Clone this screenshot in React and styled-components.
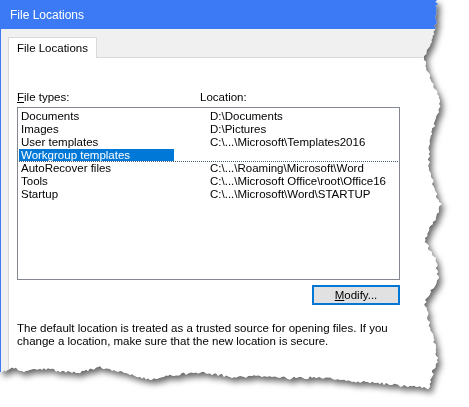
import React from "react";
import styled, { createGlobalStyle } from "styled-components";

const GlobalStyle = createGlobalStyle`
  body {
    margin: 0;
    background: #fff;
  }
`;

// torn paper edge, built from a few key points plus a small fixed jitter
const rightEdge = [
  [0, 437], [20, 436], [40, 432], [60, 424], [80, 430], [100, 441],
  [120, 436], [140, 430], [165, 429], [190, 434], [205, 441], [225, 432],
  [240, 424], [260, 436], [280, 438], [300, 425], [320, 428], [340, 434],
  [360, 437], [375, 432], [386, 430],
];
const bottomEdge = [
  [430, 388], [410, 386], [380, 383], [350, 381], [320, 377], [290, 378],
  [260, 376], [234, 377], [200, 372], [170, 375], [150, 379], [130, 374],
  [100, 367], [80, 372], [60, 371], [40, 368], [25, 372], [12, 367],
  [5, 372], [0, 371],
];

const jitter = (i) => {
  const v = Math.sin(i * 12.9898) * 43758.5453;
  return (v - Math.floor(v) - 0.5) * 3;
};

const lerp = (pts, t) => {
  for (let k = 0; k < pts.length - 1; k++) {
    const [a, av] = pts[k];
    const [b, bv] = pts[k + 1];
    const lo = Math.min(a, b);
    const hi = Math.max(a, b);
    if (t >= lo && t <= hi) {
      return av + ((bv - av) * (t - a)) / (b - a || 1);
    }
  }
  return pts[pts.length - 1][1];
};

const buildClip = () => {
  const pts = ["0px 0px"];
  let i = 0;
  for (let y = 0; y <= 386; y += 2) {
    const x = lerp(rightEdge, y) + (y === 0 ? 0 : jitter(i++));
    pts.push(`${x.toFixed(1)}px ${y}px`);
  }
  for (let x = 430; x >= 0; x -= 2) {
    const y = lerp(bottomEdge, x) + jitter(i++);
    pts.push(`${x}px ${y.toFixed(1)}px`);
  }
  pts.push("0px 371px");
  return `polygon(${pts.join(", ")})`;
};

const clip = buildClip();

const Page = styled.div`
  width: 469px;
  height: 407px;
  background: #fff;
  overflow: hidden;
`;

const Shadow = styled.div`
  width: 448px;
  height: 392px;
  filter: drop-shadow(3px 4px 3px rgba(0, 0, 0, 0.6));
`;

const Dialog = styled.div`
  width: 100%;
  height: 100%;
  box-sizing: border-box;
  display: flex;
  flex-direction: column;
  background: #f0f0f0;
  border-left: 1px solid #3b79f5;
  clip-path: ${clip};
  font-family: "Liberation Sans", Arial, sans-serif;
  font-size: 11.5px;
  color: #000;
`;

const TitleBar = styled.div`
  height: 29px;
  flex: none;
  display: flex;
  align-items: center;
  padding-left: 9px;
  background: #3b79f5;
  color: #fff;
  font-size: 12px;
`;

const Body = styled.div`
  flex: 1;
  display: flex;
  flex-direction: column;
  padding: 8px 0 0 7px;
`;

const Tab = styled.div`
  width: 89px;
  height: 21px;
  box-sizing: border-box;
  padding-left: 8px;
  line-height: 21px;
  background: #fff;
  border: 1px solid #d9d9d9;
  border-bottom: none;
  margin-bottom: -1px;
  position: relative;
  z-index: 1;
`;

const Panel = styled.div`
  flex: 1;
  background: #fff;
  border: 1px solid #d9d9d9;
  border-right: none;
  padding: 33px 0 0 8px;
`;

const Labels = styled.div`
  display: flex;
  height: 13px;
  line-height: 13px;
`;

const Label = styled.span`
  width: ${(p) => p.$w || "auto"};
  u {
    text-decoration: underline;
    text-underline-offset: 1px;
  }
`;

const ListBox = styled.div`
  margin-top: 3px;
  width: 383px;
  height: 173px;
  box-sizing: border-box;
  border: 1px solid #828790;
  padding: 2px 1px 1px;
`;

const Row = styled.div`
  display: flex;
  height: 13px;
  box-sizing: border-box;
  white-space: nowrap;
  border-bottom: ${(p) => (p.$focus ? "1px dotted #4a5a7a" : "none")};
  line-height: ${(p) => (p.$focus ? "12px" : "13px")};
`;

const Name = styled.span`
  width: 155px;
  box-sizing: border-box;
  padding-left: 2px;
  background: ${(p) => (p.$selected ? "#0078d7" : "transparent")};
  color: ${(p) => (p.$selected ? "#fff" : "#000")};
`;

const Value = styled.span`
  padding-left: 36px;
`;

const ButtonRow = styled.div`
  width: 383px;
  margin-top: 5px;
  display: flex;
  justify-content: flex-end;
`;

const Button = styled.button`
  width: 88px;
  height: 20px;
  box-sizing: border-box;
  padding: 0;
  border: 2px solid #0078d7;
  background: #e1e1e1;
  font: inherit;
  color: #000;
  u {
    text-underline-offset: 1px;
  }
`;

const Note = styled.p`
  margin: 17px 0 0;
  line-height: 13px;
  white-space: nowrap;
`;

const fileTypes = [
  ["Documents", "D:\\Documents"],
  ["Images", "D:\\Pictures"],
  ["User templates", "C:\\...\\Microsoft\\Templates2016"],
  ["Workgroup templates", ""],
  ["AutoRecover files", "C:\\...\\Roaming\\Microsoft\\Word"],
  ["Tools", "C:\\...\\Microsoft Office\\root\\Office16"],
  ["Startup", "C:\\...\\Microsoft\\Word\\STARTUP"],
];

const selected = "Workgroup templates";

export default function App() {
  return (
    <Page>
      <GlobalStyle />
      <Shadow>
        <Dialog>
          <TitleBar>File Locations</TitleBar>
          <Body>
            <Tab>File Locations</Tab>
            <Panel>
              <Labels>
                <Label $w="183px">
                  <u>F</u>ile types:
                </Label>
                <Label>Location:</Label>
              </Labels>
              <ListBox>
                {fileTypes.map(([name, path]) => (
                  <Row key={name} $focus={name === selected}>
                    <Name $selected={name === selected}>{name}</Name>
                    <Value>{path}</Value>
                  </Row>
                ))}
              </ListBox>
              <ButtonRow>
                <Button>
                  <u>M</u>odify...
                </Button>
              </ButtonRow>
              <Note>
                The default location is treated as a trusted source for opening files. If you
                <br />
                change a location, make sure that the new location is secure.
              </Note>
            </Panel>
          </Body>
        </Dialog>
      </Shadow>
    </Page>
  );
}
